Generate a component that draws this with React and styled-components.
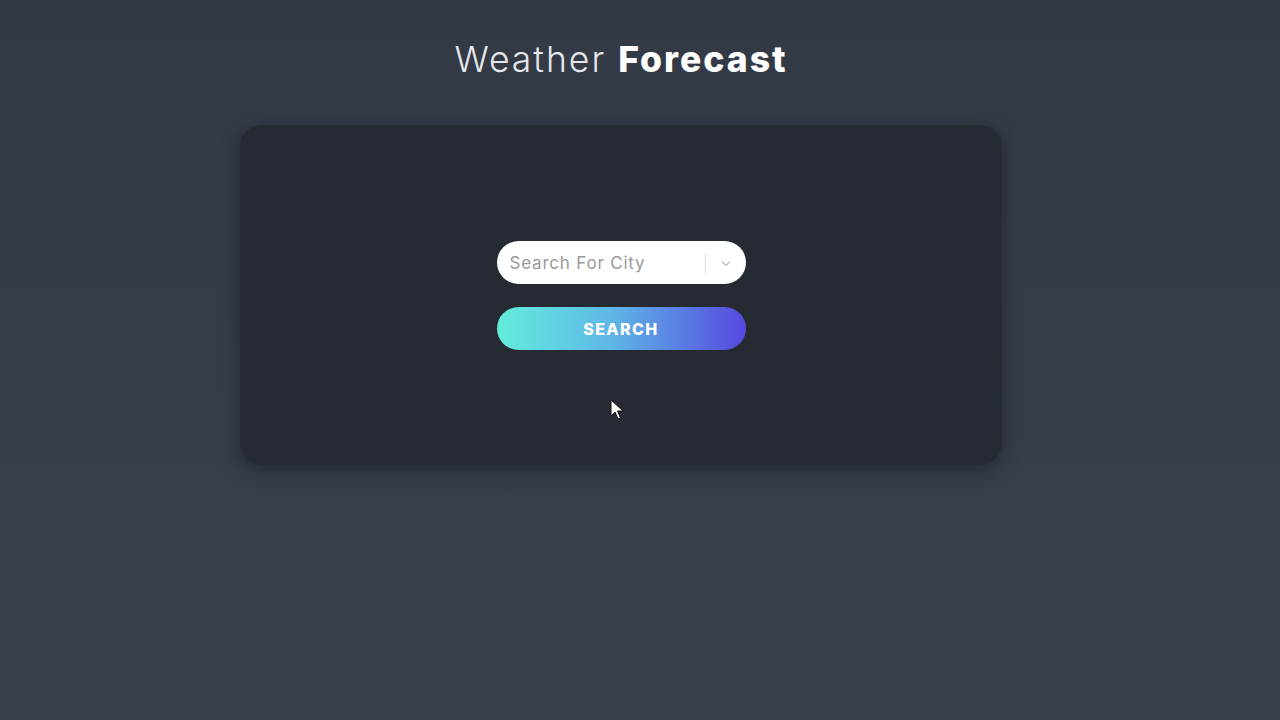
import React from "react";
import styled, { createGlobalStyle } from "styled-components";

const GlobalStyle = createGlobalStyle`
  html, body {
    margin: 0;
    padding: 0;
    background: #363d49;
    font-family: "Inter", "Open Sans", sans-serif;
  }
`;

const Page = styled.div`
  position: relative;
  width: 1280px;
  height: 720px;
  box-sizing: border-box;
  padding-right: 38px;
  background: linear-gradient(180deg, #333a46 0%, #363d49 40%, #37404c 100%);
  display: flex;
  flex-direction: column;
  align-items: center;
  overflow: hidden;
`;

const Title = styled.h1`
  margin: 38px 0 0 0;
  height: 44px;
  font-size: 35.5px;
  line-height: 44px;
  font-weight: 300;
  color: #e4e7ec;
  letter-spacing: 2px;

  b {
    font-weight: 800;
    color: #ffffff;
  }
`;

const Card = styled.div`
  margin-top: 43px;
  width: 762px;
  height: 340px;
  border-radius: 22px;
  background: #262a33;
  box-shadow: 0 4px 18px rgba(20, 22, 28, 0.55);
  display: flex;
  flex-direction: column;
  align-items: center;
  padding-top: 116px;
  box-sizing: border-box;
`;

const Select = styled.div`
  width: 249px;
  height: 43px;
  border-radius: 22px;
  background: #ffffff;
  display: flex;
  align-items: center;
  box-sizing: border-box;
  padding: 0 12px 0 13px;
`;

const Placeholder = styled.span`
  flex: 1;
  font-size: 17px;
  color: #9a9a9a;
  font-weight: 400;
  letter-spacing: 0.8px;
`;

const Divider = styled.span`
  width: 1px;
  height: 20px;
  background: #dedede;
  margin-right: 12px;
`;

const Chevron = styled.svg`
  width: 16px;
  height: 16px;
  color: #c9c9c9;
`;

const Button = styled.button`
  margin-top: 23px;
  width: 249px;
  height: 43px;
  border: none;
  border-radius: 22px;
  background: linear-gradient(90deg, #62ecdc 0%, #5fb8e6 45%, #5548e0 100%);
  color: #ffffff;
  font-family: "Inter", sans-serif;
  font-weight: 800;
  font-size: 16px;
  letter-spacing: 1.4px;
  cursor: pointer;
`;

const Cursor = styled.svg`
  position: absolute;
  left: 610px;
  top: 399px;
  width: 14px;
  height: 22px;
`;

export default function App() {
  return (
    <>
      <GlobalStyle />
      <Page>
        <Title>
          Weather <b>Forecast</b>
        </Title>
        <Card>
          <Select>
            <Placeholder>Search For City</Placeholder>
            <Divider />
            <Chevron viewBox="0 0 20 20" fill="none" stroke="currentColor" strokeWidth="2">
              <path d="M5 8l5 5 5-5" />
            </Chevron>
          </Select>
          <Button>SEARCH</Button>
        </Card>
        <Cursor viewBox="0 0 14 22">
          <path d="M1 1 L1 17 L5 13 L8 20 L10.5 19 L7.5 12 L13 12 Z" fill="#ffffff" stroke="#111" strokeWidth="1" />
        </Cursor>
      </Page>
    </>
  );
}
